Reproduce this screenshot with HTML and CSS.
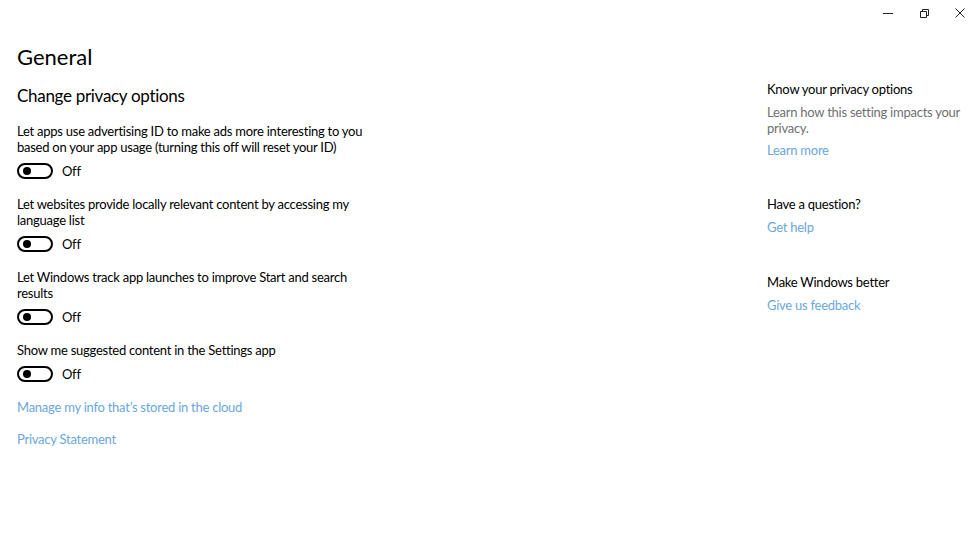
FILE: index.html
```html
<!DOCTYPE html>
<html>
<head>
<meta charset="utf-8">
<link rel="stylesheet" href="styles.css">
</head>
<body>
<div class="titlebar">
  <span class="ctl"><svg width="10" height="10" viewBox="0 0 10 10"><path d="M0 5.5H10" stroke="#222" stroke-width="1"/></svg></span>
  <span class="ctl"><svg width="10" height="10" viewBox="0 0 10 10"><path d="M1.5 3.5H7.5V9.5H1.5Z M3.5 3.5V1.5H9.5V7.5H7.5" fill="none" stroke="#222" stroke-width="1"/></svg></span>
  <span class="ctl"><svg width="10" height="10" viewBox="0 0 10 10"><path d="M0.5 0.5L9.5 9.5M9.5 0.5L0.5 9.5" stroke="#222" stroke-width="1"/></svg></span>
</div>
<div class="page">
  <main class="main">
    <h1 class="title">General</h1>
    <h2 class="subtitle">Change privacy options</h2>
    <div class="setting">
      <p class="label">Let apps use advertising ID to make ads more interesting to you based on your app usage (turning this off will reset your ID)</p>
      <div class="toggle-row"><span class="toggle"><span class="knob"></span></span><span class="state">Off</span></div>
    </div>
    <div class="setting">
      <p class="label">Let websites provide locally relevant content by accessing my language list</p>
      <div class="toggle-row"><span class="toggle"><span class="knob"></span></span><span class="state">Off</span></div>
    </div>
    <div class="setting">
      <p class="label">Let Windows track app launches to improve Start and search results</p>
      <div class="toggle-row"><span class="toggle"><span class="knob"></span></span><span class="state">Off</span></div>
    </div>
    <div class="setting">
      <p class="label">Show me suggested content in the Settings app</p>
      <div class="toggle-row"><span class="toggle"><span class="knob"></span></span><span class="state">Off</span></div>
    </div>
    <a class="link main-link">Manage my info that’s stored in the cloud</a>
    <a class="link main-link">Privacy Statement</a>
  </main>
  <aside class="aside">
    <section class="side-block">
      <h3 class="side-head">Know your privacy options</h3>
      <p class="side-text">Learn how this setting impacts your privacy.</p>
      <a class="link">Learn more</a>
    </section>
    <section class="side-block">
      <h3 class="side-head">Have a question?</h3>
      <a class="link">Get help</a>
    </section>
    <section class="side-block">
      <h3 class="side-head">Make Windows better</h3>
      <a class="link">Give us feedback</a>
    </section>
  </aside>
</div>
</body>
</html>
```
FILE: styles.css
```css
html, body {
  margin: 0;
  padding: 0;
  background: #fff;
}
body {
  font-family: Lato, "Open Sans", sans-serif;
  font-size: 13px;
  line-height: 16px;
  letter-spacing: -0.25px;
  color: #000;
  width: 970px;
  height: 546px;
  overflow: hidden;
}
.titlebar {
  display: flex;
  justify-content: flex-end;
  align-items: center;
  gap: 26px;
  height: 26px;
  padding-right: 5px;
}
.ctl {
  width: 10px;
  height: 10px;
  display: flex;
}
.page {
  display: flex;
}
.main {
  padding-left: 17px;
  width: 750px;
}
.title {
  font-size: 22px;
  font-weight: 400;
  letter-spacing: 0;
  line-height: 30px;
  margin: 16px 0 0;
}
.subtitle {
  font-size: 17px;
  font-weight: 400;
  letter-spacing: -0.3px;
  line-height: 24px;
  margin: 12px 0 0;
}
.setting {
  margin-top: 15px;
}
.setting + .setting {
  margin-top: 17px;
}
.label {
  margin: 0;
  width: 350px;
}
.toggle-row {
  display: flex;
  align-items: center;
  margin-top: 8px;
  height: 16px;
}
.toggle {
  box-sizing: border-box;
  width: 36px;
  height: 16px;
  border: 2px solid #000;
  border-radius: 8px;
  display: flex;
  align-items: center;
  padding-left: 4px;
}
.knob {
  width: 8px;
  height: 8px;
  border-radius: 50%;
  background: #000;
}
.state {
  margin-left: 9px;
}
.link {
  color: #6aa7dc;
  display: block;
}
.main-link {
  margin-top: 17px;
}
.main-link + .main-link {
  margin-top: 16px;
}
.aside {
  width: 200px;
  padding-top: 55px;
}
.side-block {
  margin-bottom: 38px;
}
.side-block:nth-child(2) {
  margin-bottom: 39px;
}
.side-head {
  font-size: 13px;
  font-weight: 400;
  margin: 0 0 7px;
}
.side-text {
  margin: 0 0 6px;
  color: #707070;
}
```
